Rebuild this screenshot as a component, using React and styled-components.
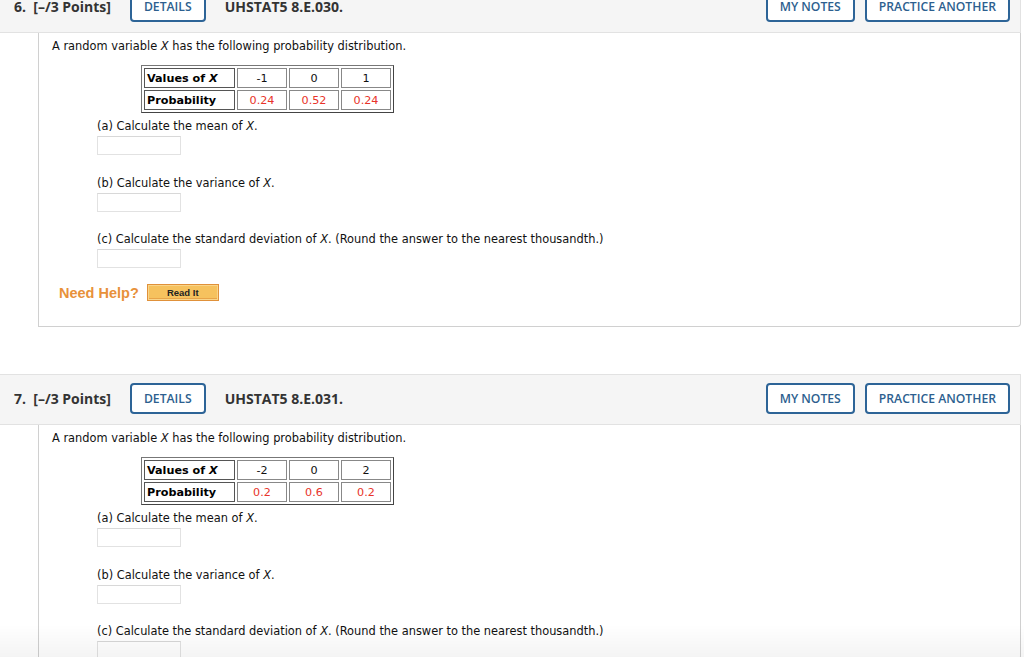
import styled, { createGlobalStyle } from "styled-components";

const GlobalStyle = createGlobalStyle`
  html, body {
    margin: 0;
    padding: 0;
    background: #fff;
    overflow: hidden;
  }
  body {
    font-family: "Open Sans", "Liberation Sans", sans-serif;
    color: #333;
  }
`;

const questions = [
  {
    num: 6,
    code: "UHSTAT5 8.E.030.",
    values: ["-1", "0", "1"],
    probs: ["0.24", "0.52", "0.24"],
    help: true,
  },
  {
    num: 7,
    code: "UHSTAT5 8.E.031.",
    values: ["-2", "0", "2"],
    probs: ["0.2", "0.6", "0.2"],
    help: false,
  },
];

const Page = styled.div`
  margin-top: -18px;
  margin-right: 3px;
  display: flex;
  flex-direction: column;
  gap: 47px;
`;

const Question = styled.section`
  display: flex;
  flex-direction: column;
`;

const Header = styled.div`
  height: 49px;
  display: flex;
  align-items: center;
  background: #f5f5f5;
  border-top: 1px solid #e2e2e2;
  border-bottom: 1px solid #e2e2e2;
  border-right: 1px solid #e2e2e2;
  padding: 0 10px 0 14px;
`;

const Points = styled.span`
  font-size: 14px;
  font-weight: 700;
  color: #333;
  margin-right: 19px;
  margin-top: -2px;
  white-space: pre;
`;

const HeadButton = styled.button`
  height: 31px;
  padding: 0 12px;
  margin-top: -2px;
  border: 2px solid #2d6497;
  border-radius: 4px;
  background: #fff;
  color: #2d5f8f;
  font-family: "Open Sans", sans-serif;
  font-size: 12.2px;
  font-weight: 600;
  cursor: pointer;
`;

const Code = styled.span`
  margin-left: 19px;
  margin-top: -2px;
  font-size: 14px;
  font-weight: 700;
  color: #333;
`;

const Spacer = styled.div`
  flex: 1;
`;

const RightButtons = styled.div`
  display: flex;
  gap: 10px;
`;

const Body = styled.div`
  margin-left: 38px;
  border-left: 1px solid #d0d0d0;
  border-right: 1px solid #d0d0d0;
  border-bottom: ${(p) => (p.$closed ? "1px solid #d0d0d0" : "none")};
  border-bottom-right-radius: 4px;
  padding: 6px 0 0 13px;
  min-height: ${(p) => (p.$closed ? "287px" : "auto")};
  font-family: "DejaVu Sans", Verdana, sans-serif;
  font-size: 11.4px;
  color: #111;
`;

const Intro = styled.div`
  line-height: 14px;
`;

const Table = styled.table`
  margin: 12px 0 0 89px;
  border-collapse: separate;
  border-spacing: 2px;
  border: 1px solid #777;
  border-right-color: #444;
  border-bottom-color: #444;

  td {
    border: 1px solid #888;
    height: 18px;
    padding: 0 2px;
    text-align: center;
    font-size: 11.2px;
    width: 44px;
  }

  th {
    border: 1px solid #555;
    height: 18px;
    padding: 0 2px;
    text-align: left;
    font-weight: 700;
    font-size: 11.2px;
    width: 85px;
    color: #000;
  }
`;

const Prob = styled.td`
  color: #e8332a;
`;

const Part = styled.div`
  margin-left: 45px;
  margin-top: ${(p) => p.$top}px;
`;

const PartText = styled.div`
  line-height: 14px;
`;

const AnswerBox = styled.div`
  width: 82px;
  height: 17px;
  margin-top: 3px;
  border: 1px solid #e2e2e2;
  border-top-color: #d8d8d8;
  background: #fff;
`;

const Help = styled.div`
  display: flex;
  align-items: center;
  gap: 8px;
  margin: 16px 0 0 7px;
`;

const HelpLabel = styled.span`
  font-family: "Liberation Sans", Arial, sans-serif;
  font-weight: 700;
  font-size: 14.5px;
  color: #e8913a;
`;

const ReadIt = styled.button`
  width: 72px;
  height: 17px;
  padding: 0;
  background: #f6c25e;
  border: 1px solid #e0913a;
  box-shadow: inset 0 0 0 1px #f9d58a, inset 0 -1px 0 1px #e8a448;
  font-family: "Liberation Sans", Arial, sans-serif;
  font-weight: 700;
  font-size: 9.5px;
  color: #222;
  cursor: pointer;
`;

const BottomFade = styled.div`
  position: fixed;
  left: 0;
  right: 0;
  bottom: 0;
  height: 32px;
  background: linear-gradient(
    to bottom,
    rgba(0, 0, 0, 0),
    rgba(0, 0, 0, 0.045)
  );
  pointer-events: none;
`;

const Italic = styled.i`
  font-style: italic;
`;

function QuestionBlock({ q }) {
  return (
    <Question>
      <Header>
        <Points>{`${q.num}.  [–/3 Points]`}</Points>
        <HeadButton>DETAILS</HeadButton>
        <Code>{q.code}</Code>
        <Spacer />
        <RightButtons>
          <HeadButton>MY NOTES</HeadButton>
          <HeadButton>PRACTICE ANOTHER</HeadButton>
        </RightButtons>
      </Header>
      <Body $closed={q.help}>
        <Intro>
          A random variable <Italic>X</Italic> has the following probability
          distribution.
        </Intro>
        <Table>
          <tbody>
            <tr>
              <th>
                Values of <Italic>X</Italic>
              </th>
              {q.values.map((v, i) => (
                <td key={i}>{v}</td>
              ))}
            </tr>
            <tr>
              <th>Probability</th>
              {q.probs.map((v, i) => (
                <Prob key={i}>{v}</Prob>
              ))}
            </tr>
          </tbody>
        </Table>
        <Part $top={6}>
          <PartText>
            (a) Calculate the mean of <Italic>X</Italic>.
          </PartText>
          <AnswerBox />
        </Part>
        <Part $top={21}>
          <PartText>
            (b) Calculate the variance of <Italic>X</Italic>.
          </PartText>
          <AnswerBox />
        </Part>
        <Part $top={20}>
          <PartText>
            (c) Calculate the standard deviation of <Italic>X</Italic>. (Round
            the answer to the nearest thousandth.)
          </PartText>
          <AnswerBox />
        </Part>
        {q.help && (
          <Help>
            <HelpLabel>Need Help?</HelpLabel>
            <ReadIt>Read It</ReadIt>
          </Help>
        )}
      </Body>
    </Question>
  );
}

export default function App() {
  return (
    <>
      <GlobalStyle />
      <Page>
        {questions.map((q) => (
          <QuestionBlock key={q.num} q={q} />
        ))}
      </Page>
      <BottomFade />
    </>
  );
}
